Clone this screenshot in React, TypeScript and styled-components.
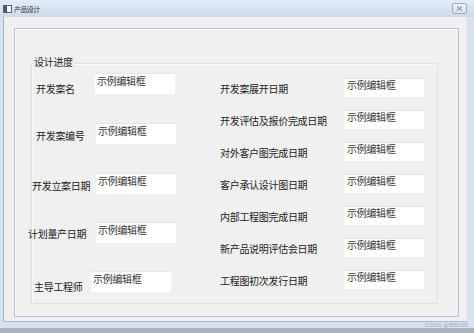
import React from "react";
import styled, { createGlobalStyle } from "styled-components";

const Global = createGlobalStyle`
  html, body { margin: 0; padding: 0; background: #f0f0f0; }
  #root { width: 474px; height: 333px; overflow: hidden; }
`;

const FONT = `"Noto Sans CJK SC", "Noto Sans", "DejaVu Sans", sans-serif`;

const Window = styled.div`
  width: 474px;
  height: 333px;
  display: flex;
  flex-direction: column;
  background: #d6e2ef;
  font-family: ${FONT};
  position: relative;
  overflow: hidden;
`;

const TitleBar = styled.div`
  height: 17px;
  flex: none;
  display: flex;
  align-items: center;
  padding-left: 3px;
  padding-right: 7px;
  background: linear-gradient(#e2ebf6, #cbdaec);
  box-sizing: border-box;
`;

const TitleText = styled.span`
  font-size: 7px;
  line-height: 8px;
  color: #333;
  margin-left: 2px;
  letter-spacing: -0.6px;
`;

const CloseButton = styled.div`
  margin-left: auto;
  width: 15px;
  height: 11px;
  box-sizing: border-box;
  border: 1px solid #9eacbc;
  border-radius: 2px;
  background: linear-gradient(#eef2f7, #d7dfe9);
  display: flex;
  align-items: center;
  justify-content: center;
`;

const Middle = styled.div`
  flex: 1;
  display: flex;
  padding: 0 7px 0 3px;
`;

const Client = styled.div`
  flex: 1;
  display: flex;
  flex-direction: column;
  background: #f0f0f0;
  border-left: 1px solid #a3b3c6;
  border-bottom: 1px solid #a9b8ca;
  padding: 11px 8px 4px 10px;
`;

const Panel = styled.div`
  flex: 1;
  display: flex;
  flex-direction: column;
  border: 1px solid #bdb9df;
  box-shadow: inset 1px 1px 0 #fbfbff;
  padding: 34px 20px 12px 16px;
`;

const GroupBox = styled.div`
  flex: 1;
  position: relative;
  border: 1px solid #e0e0e0;
  box-shadow: inset 1px 1px 0 #fafafa;
  display: grid;
  grid-template-columns: 188px 1fr;
`;

const Legend = styled.span`
  position: absolute;
  left: 1px;
  top: -8px;
  padding: 0 1px;
  background: #f0f0f0;
  font-size: 10px;
  line-height: 12px;
  letter-spacing: -0.3px;
  color: #222;
`;

const Column = styled.div<{ $pt: number; $gap: number }>`
  display: flex;
  flex-direction: column;
  padding-top: ${(p) => p.$pt}px;
  gap: ${(p) => p.$gap}px;
`;

const Row = styled.div<{ $mt?: number }>`
  display: flex;
  align-items: flex-start;
  margin-top: ${(p) => p.$mt ?? 0}px;
`;

const Label = styled.span<{ $ml: number; $mt: number; $w: number }>`
  flex: none;
  width: ${(p) => p.$w}px;
  margin-left: ${(p) => p.$ml}px;
  margin-top: ${(p) => p.$mt}px;
  font-size: 10px;
  line-height: 12px;
  letter-spacing: -0.3px;
  color: #222;
  white-space: nowrap;
`;

const EditBox = styled.div<{ $h: number; $pt: number; $pl: number }>`
  flex: none;
  width: 80px;
  height: ${(p) => p.$h}px;
  box-sizing: border-box;
  background: #ffffff;
  border-top: 1px solid #e4e4e4;
  padding: ${(p) => p.$pt}px 0 0 ${(p) => p.$pl}px;
  font-size: 10px;
  line-height: 12px;
  letter-spacing: -0.3px;
  color: #333;
  white-space: nowrap;
`;

const BottomFrame = styled.div`
  height: 11px;
  flex: none;
  display: flex;
  flex-direction: column;
`;

const FrameLight = styled.div`
  height: 6px;
  background: #d6e2ef;
`;

const FrameGray = styled.div`
  flex: 1;
  background: #aab2bb;
`;

const Watermark = styled.span`
  position: absolute;
  right: 6px;
  bottom: 5px;
  font-family: "Liberation Sans", Arial, sans-serif;
  font-size: 6px;
  line-height: 6px;
  color: #a3acb6;
`;

const BOX_TEXT = "示例编辑框";

const leftRows = [
  { text: "开发案名", mt: 9, lx: 36, bx: 95, ly: 10 },
  { text: "开发案编号", mt: 28, lx: 36, bx: 96, ly: 7 },
  { text: "开发立案日期", mt: 29, lx: 32, bx: 96, ly: 7 },
  { text: "计划量产日期", mt: 28, lx: 28, bx: 96, ly: 6 },
  { text: "主导工程师", mt: 28, lx: 34, bx: 91, ly: 10 },
];

const rightRows = [
  "开发案展开日期",
  "开发评估及报价完成日期",
  "对外客户图完成日期",
  "客户承认设计图日期",
  "内部工程图完成日期",
  "新产品说明评估会日期",
  "工程图初次发行日期",
];

const AppIcon = () => (
  <svg width="9" height="8" viewBox="0 0 9 8">
    <rect x="0.5" y="0.5" width="8" height="7" fill="#f4f6f8" stroke="#55606c" />
    <rect x="1" y="1" width="3" height="6" fill="#4a5563" />
  </svg>
);

const CloseIcon = () => (
  <svg width="7" height="5" viewBox="0 0 7 5">
    <path d="M1 0.5 L6 4.5 M6 0.5 L1 4.5" stroke="#6a7786" strokeWidth="1" />
  </svg>
);

export default function App() {
  return (
    <>
      <Global />
      <Window>
        <TitleBar>
          <AppIcon />
          <TitleText>产品设计</TitleText>
          <CloseButton>
            <CloseIcon />
          </CloseButton>
        </TitleBar>
        <Middle>
          <Client>
            <Panel>
              <GroupBox>
                <Legend>设计进度</Legend>
                <Column $pt={0} $gap={0}>
                  {leftRows.map((r) => (
                    <Row key={r.text} $mt={r.mt}>
                      <Label $ml={r.lx - 32} $mt={r.ly} $w={r.bx - r.lx}>
                        {r.text}
                      </Label>
                      <EditBox $h={21} $pt={1} $pl={2}>
                        {BOX_TEXT}
                      </EditBox>
                    </Row>
                  ))}
                </Column>
                <Column $pt={14} $gap={13}>
                  {rightRows.map((t) => (
                    <Row key={t}>
                      <Label $ml={0} $mt={5} $w={124}>
                        {t}
                      </Label>
                      <EditBox $h={19} $pt={0} $pl={3}>
                        {BOX_TEXT}
                      </EditBox>
                    </Row>
                  ))}
                </Column>
              </GroupBox>
            </Panel>
          </Client>
        </Middle>
        <BottomFrame>
          <FrameLight />
          <FrameGray />
        </BottomFrame>
        <Watermark>CSDN @BB0S6</Watermark>
      </Window>
    </>
  );
}
